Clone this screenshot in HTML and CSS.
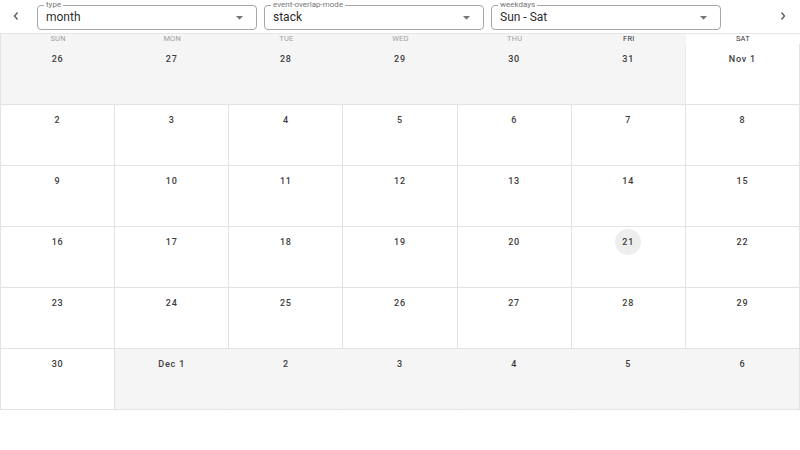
FILE: index.html
```html
<!DOCTYPE html>
<html>
<head>
<meta charset="utf-8">
<link rel="stylesheet" href="styles.css">
</head>
<body>
<div class="toolbar">
  <button class="nav nav-left" aria-label="prev">
    <svg width="8" height="10" viewBox="0 0 8 10"><polyline points="5.5,1.5 2.5,5 5.5,8.5" fill="none" stroke="#555" stroke-width="1.3"/></svg>
  </button>
  <fieldset class="select w220">
    <legend>type</legend>
    <div class="sel-row"><span class="sel-val">month</span><svg class="caret" width="7" height="4" viewBox="0 0 7 4"><polygon points="0,0 7,0 3.5,3.8" fill="#757575"/></svg></div>
  </fieldset>
  <fieldset class="select w220">
    <legend>event-overlap-mode</legend>
    <div class="sel-row"><span class="sel-val">stack</span><svg class="caret" width="7" height="4" viewBox="0 0 7 4"><polygon points="0,0 7,0 3.5,3.8" fill="#757575"/></svg></div>
  </fieldset>
  <fieldset class="select w230">
    <legend>weekdays</legend>
    <div class="sel-row"><span class="sel-val">Sun - Sat</span><svg class="caret" width="7" height="4" viewBox="0 0 7 4"><polygon points="0,0 7,0 3.5,3.8" fill="#757575"/></svg></div>
  </fieldset>
  <div class="spacer"></div>
  <button class="nav nav-right" aria-label="next">
    <svg width="8" height="10" viewBox="0 0 8 10"><polyline points="2.5,1.5 5.5,5 2.5,8.5" fill="none" stroke="#555" stroke-width="1.3"/></svg>
  </button>
</div>

<div class="calendar">
  <div class="head">
    <div class="wd past out">Sun</div>
    <div class="wd past out">Mon</div>
    <div class="wd past out">Tue</div>
    <div class="wd past out">Wed</div>
    <div class="wd past out">Thu</div>
    <div class="wd out">Fri</div>
    <div class="wd">Sat</div>
  </div>
  <div class="weeks">
    <div class="day out"><span class="lbl">26</span></div>
    <div class="day out"><span class="lbl">27</span></div>
    <div class="day out"><span class="lbl">28</span></div>
    <div class="day out"><span class="lbl">29</span></div>
    <div class="day out"><span class="lbl">30</span></div>
    <div class="day out edge"><span class="lbl">31</span></div>
    <div class="day"><span class="lbl">Nov 1</span></div>

    <div class="day"><span class="lbl">2</span></div>
    <div class="day"><span class="lbl">3</span></div>
    <div class="day"><span class="lbl">4</span></div>
    <div class="day"><span class="lbl">5</span></div>
    <div class="day"><span class="lbl">6</span></div>
    <div class="day"><span class="lbl">7</span></div>
    <div class="day"><span class="lbl">8</span></div>

    <div class="day"><span class="lbl">9</span></div>
    <div class="day"><span class="lbl">10</span></div>
    <div class="day"><span class="lbl">11</span></div>
    <div class="day"><span class="lbl">12</span></div>
    <div class="day"><span class="lbl">13</span></div>
    <div class="day"><span class="lbl">14</span></div>
    <div class="day"><span class="lbl">15</span></div>

    <div class="day"><span class="lbl">16</span></div>
    <div class="day"><span class="lbl">17</span></div>
    <div class="day"><span class="lbl">18</span></div>
    <div class="day"><span class="lbl">19</span></div>
    <div class="day"><span class="lbl">20</span></div>
    <div class="day"><span class="lbl today">21</span></div>
    <div class="day"><span class="lbl">22</span></div>

    <div class="day"><span class="lbl">23</span></div>
    <div class="day"><span class="lbl">24</span></div>
    <div class="day"><span class="lbl">25</span></div>
    <div class="day"><span class="lbl">26</span></div>
    <div class="day"><span class="lbl">27</span></div>
    <div class="day"><span class="lbl">28</span></div>
    <div class="day"><span class="lbl">29</span></div>

    <div class="day"><span class="lbl">30</span></div>
    <div class="day out"><span class="lbl">Dec 1</span></div>
    <div class="day out"><span class="lbl">2</span></div>
    <div class="day out"><span class="lbl">3</span></div>
    <div class="day out"><span class="lbl">4</span></div>
    <div class="day out"><span class="lbl">5</span></div>
    <div class="day out last"><span class="lbl">6</span></div>
  </div>
</div>
</body>
</html>
```

FILE: styles.css
```css
* { box-sizing: border-box; }
html, body { margin: 0; padding: 0; background: #fff; }
body {
  font-family: Roboto, "Liberation Sans", Arial, sans-serif;
  color: rgba(0,0,0,0.87);
  width: 800px;
  height: 450px;
  overflow: hidden;
}

.toolbar {
  display: flex;
  align-items: flex-start;
  height: 33px;
}
.nav {
  border: 0;
  background: transparent;
  padding: 0;
  height: 32px;
  display: flex;
  align-items: center;
  justify-content: center;
}
.nav svg { display: block; }
.nav-left { width: 31px; margin-right: 6px; }
.nav-right { width: 34px; }
.spacer { flex: 1; }

.select {
  margin: 0 7px 0 0;
  padding: 0 13px 3px 8px;
  border: 1px solid #a6a6a6;
  border-radius: 4px;
  height: 30px;
  min-width: 0;
}
.w220 { width: 220px; }
.w230 { width: 230px; }
.select legend {
  font-size: 8px;
  line-height: 10px;
  color: #757575;
  padding: 0 2px;
  margin-left: -2px;
}
.sel-row {
  display: flex;
  align-items: center;
  height: 15px;
}
.sel-val {
  flex: 1;
  font-size: 12px;
  line-height: 15px;
  color: rgba(0,0,0,0.87);
}
.caret { display: block; margin-top: 1px; }

.calendar {
  border-top: 1px solid #e6e6e6;
  border-left: 1px solid #e3e3e3;
  width: 800px;
}
.head {
  display: grid;
  grid-template-columns: repeat(7, 1fr);
  height: 10px;
}
.wd {
  font-size: 7.5px;
  line-height: 10px;
  text-align: center;
  text-transform: uppercase;
  color: #333;
  letter-spacing: 0.2px;
}
.wd.past { color: #a0a0a0; }
.wd.out { background: #f5f5f5; }

.weeks {
  display: grid;
  grid-template-columns: repeat(7, 1fr);
  grid-auto-rows: 61px;
}
.day {
  border-right: 1px solid #e3e3e3;
  border-bottom: 1px solid #e3e3e3;
  display: flex;
  justify-content: center;
  align-items: flex-start;
  background: #fff;
}
.day.out { background: #f5f5f5; border-right-color: #f5f5f5; }
.day.out.edge { border-right-color: #ebebeb; }
.day.out.last { border-right-color: #e3e3e3; }
.lbl {
  margin-top: 2px;
  min-width: 26px;
  height: 26px;
  padding: 0 4px;
  border-radius: 13px;
  display: flex;
  align-items: center;
  justify-content: center;
  font-size: 9px;
  font-weight: 500;
  letter-spacing: 0.8px;
  color: #3c3c3c;
}
.lbl.today { background: #eeeeee; }
```
